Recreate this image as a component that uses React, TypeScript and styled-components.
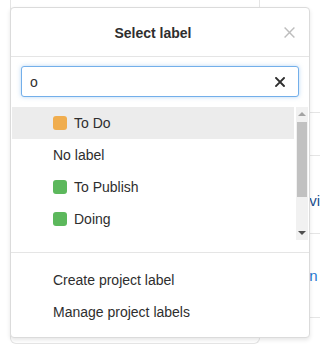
import React from "react";
import styled, {createGlobalStyle} from "styled-components";

const GlobalStyle = createGlobalStyle`
  html, body {
    margin: 0;
    padding: 0;
    background: #fff;
  }
  * {
    box-sizing: border-box;
  }
`;

const Page = styled.div`
  position: relative;
  width: 320px;
  height: 344px;
  overflow: hidden;
  font-family: "Liberation Sans", Arial, sans-serif;
  font-size: 14px;
  color: #2e2e2e;
`;

// page content that sits behind the dropdown
const Backdrop = styled.div`
  display: flex;
  height: 344px;
`;

const MainCol = styled.div`
  width: 310px;
  padding-left: 10px;
`;

const Card = styled.div`
  width: 250px;
  height: 344px;
  border: 1px solid #e5e5e5;
  border-top: none;
  border-radius: 0 0 6px 6px;
`;

const Side = styled.div`
  flex: 1;
  display: flex;
  flex-direction: column;
`;

const SideRow = styled.div<{h: number}>`
  height: ${(p) => p.h}px;
  flex-shrink: 0;
  border-bottom: 1px solid #e5e5e5;
  display: flex;
  align-items: center;
  white-space: nowrap;
  overflow: hidden;
`;

const SideLink = styled.span<{$dark?: boolean}>`
  font-size: 15px;
  color: ${(p) => (p.$dark ? "#1c4f8f" : "#1f78d1")};
  margin-top: ${(p) => (p.$dark ? "12px" : "0")};
`;

const Dropdown = styled.div`
  position: absolute;
  left: 10px;
  top: 7px;
  width: 300px;
  height: 331px;
  background: #fff;
  border: 1px solid #dbdbdb;
  border-radius: 4px;
  box-shadow: 0 2px 4px rgba(0, 0, 0, 0.1);
  display: flex;
  flex-direction: column;
`;

const Header = styled.div`
  position: relative;
  height: 49px;
  flex-shrink: 0;
  border-bottom: 1px solid #e5e5e5;
  display: flex;
  align-items: center;
  justify-content: center;
  padding: 0 24px 0 10px;
  margin-bottom: 9px;
`;

const Title = styled.span`
  font-weight: bold;
  font-size: 14px;
  margin-top: 1px;
`;

const IconButton = styled.button<{$right: number}>`
  position: absolute;
  right: ${(p) => p.$right}px;
  top: 50%;
  transform: translateY(-50%);
  width: 14px;
  height: 14px;
  padding: 0;
  border: none;
  background: none;
  display: flex;
  align-items: center;
  justify-content: center;
`;

const SearchBox = styled.div`
  position: relative;
  margin: 0 10px 10px;
  height: 31px;
  flex-shrink: 0;
`;

const SearchInput = styled.input`
  width: 100%;
  height: 100%;
  border: 1px solid #73afea;
  border-radius: 3px;
  box-shadow: 0 0 4px rgba(115, 175, 234, 0.5);
  padding: 0 30px 0 8px;
  font-family: inherit;
  font-size: 14px;
  color: #2e2e2e;
  outline: none;
`;

const ListWrap = styled.div`
  display: flex;
  height: 133px;
  flex-shrink: 0;
  margin: 0 1px 0 1px;
`;

const Items = styled.ul`
  flex: 1;
  list-style: none;
  margin: 0;
  padding: 0;
  overflow: hidden;
`;

const Item = styled.li<{$active?: boolean}>`
  height: 32px;
  display: flex;
  align-items: center;
  gap: 7px;
  padding-left: 41px;
  margin-right: 2px;
  background: ${(p) => (p.$active ? "#ececec" : "transparent")};
`;

const Swatch = styled.span<{color: string}>`
  width: 14px;
  height: 14px;
  border-radius: 3px;
  background: ${(p) => p.color};
`;

const ScrollBar = styled.div`
  width: 12px;
  background: #f1f1f1;
  display: flex;
  flex-direction: column;
  align-items: center;
`;

const Arrow = styled.div<{$down?: boolean}>`
  height: 14px;
  display: flex;
  align-items: center;
  justify-content: center;

  &::after {
    content: "";
    border-left: 4px solid transparent;
    border-right: 4px solid transparent;
    ${(p) =>
      p.$down
        ? "border-top: 4px solid #505050;"
        : "border-bottom: 4px solid #a3a3a3;"}
  }
`;

const Thumb = styled.div`
  width: 10px;
  height: 75px;
  background: #c1c1c1;
  margin-top: 1px;
`;

const Spacer = styled.div`
  flex: 1;
`;

const Footer = styled.ul`
  list-style: none;
  margin: 12px 0 0;
  padding: 10px 0 0;
  border-top: 1px solid #e5e5e5;
`;

const FooterItem = styled.li`
  height: 32px;
  display: flex;
  align-items: center;
  padding-left: 42px;
  padding-top: 2px;
`;

const Cross = ({size, color, stroke}: {size: number; color: string; stroke: number}) => (
  <svg width={size} height={size} viewBox="0 0 10 10">
    <path
      d="M1 1 L9 9 M9 1 L1 9"
      stroke={color}
      strokeWidth={stroke}
      strokeLinecap="square"
    />
  </svg>
);

const labels = [
  {name: "To Do", color: "#f0ad4e", active: true},
  {name: "No label"},
  {name: "To Publish", color: "#5cb85c"},
  {name: "Doing", color: "#5cb85c"},
];

const App: React.FC = () => {
  return (
    <Page>
      <GlobalStyle />
      <Backdrop>
        <MainCol>
          <Card />
        </MainCol>
        <Side>
          <SideRow h={113} />
          <SideRow h={43} />
          <SideRow h={78}>
            <SideLink $dark>vi</SideLink>
          </SideRow>
          <SideRow h={84}>
            <SideLink>n</SideLink>
          </SideRow>
        </Side>
      </Backdrop>

      <Dropdown>
        <Header>
          <Title>Select label</Title>
          <IconButton $right={13}>
            <Cross size={11} color="#bdbdbd" stroke={1.3} />
          </IconButton>
        </Header>

        <SearchBox>
          <SearchInput value="o" readOnly />
          <IconButton $right={12}>
            <Cross size={10} color="#2e2e2e" stroke={1.9} />
          </IconButton>
        </SearchBox>

        <ListWrap>
          <Items>
            {labels.map((l) => (
              <Item key={l.name} $active={l.active}>
                {l.color && <Swatch color={l.color} />}
                {l.name}
              </Item>
            ))}
          </Items>
          <ScrollBar>
            <Arrow />
            <Thumb />
            <Spacer />
            <Arrow $down />
          </ScrollBar>
        </ListWrap>

        <Footer>
          <FooterItem>Create project label</FooterItem>
          <FooterItem>Manage project labels</FooterItem>
        </Footer>
      </Dropdown>
    </Page>
  );
};

export default App;
